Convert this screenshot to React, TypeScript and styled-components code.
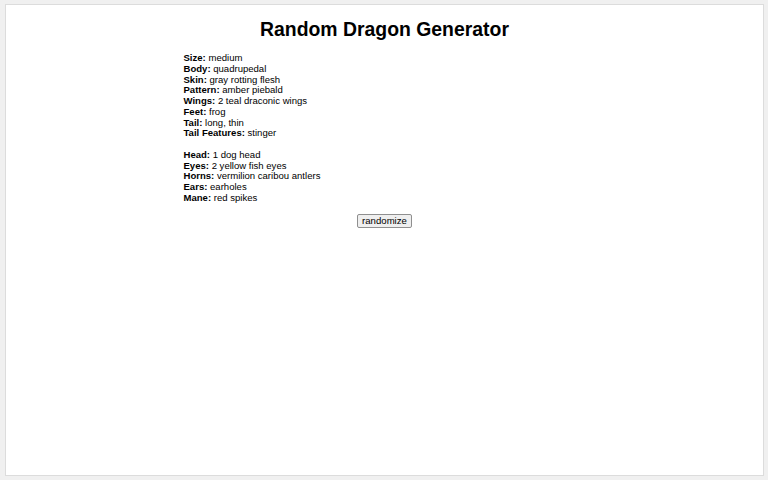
import React, { useState } from 'react';
import styled, { createGlobalStyle } from 'styled-components';

const GlobalStyle = createGlobalStyle`
  html, body {
    margin: 0;
    padding: 0;
    background: #f0f0f0;
  }
  body {
    padding: 4px 4px 4px 5px;
    font-family: "Liberation Sans", Arial, sans-serif;
    color: #000;
  }
`;

const Page = styled.div`
  box-sizing: border-box;
  min-height: calc(100vh - 8px);
  background: #fff;
  border: 1px solid #dcdcdc;
  padding-top: 13px;
`;

const Title = styled.h1`
  margin: 0 0 12px;
  font-size: 19.4px;
  font-weight: bold;
  text-align: center;
  line-height: 23px;
`;

const Sheet = styled.div`
  width: 402px;
  margin: 0 auto;
  font-size: 9.55px;
`;

const Group = styled.div`
  margin-bottom: 10.75px;
`;

const Trait = styled.div`
  line-height: 10.75px;
`;

const Label = styled.b`
  font-weight: bold;
`;

const Actions = styled.div`
  display: flex;
  justify-content: center;
  margin-top: 10px;
`;

const Button = styled.button`
  font-family: "Liberation Sans", Arial, sans-serif;
  font-size: 9.6px;
  line-height: 11px;
  padding: 0 4px 1px;
  background: #efefef;
  border: 1px solid #8f8f8f;
  border-radius: 2px;
  color: #000;
  cursor: pointer;
`;

type Traits = [string, string][];

const body: Traits = [
  ['Size', 'medium'],
  ['Body', 'quadrupedal'],
  ['Skin', 'gray rotting flesh'],
  ['Pattern', 'amber piebald'],
  ['Wings', '2 teal draconic wings'],
  ['Feet', 'frog'],
  ['Tail', 'long, thin'],
  ['Tail Features', 'stinger'],
];

const head: Traits = [
  ['Head', '1 dog head'],
  ['Eyes', '2 yellow fish eyes'],
  ['Horns', 'vermilion caribou antlers'],
  ['Ears', 'earholes'],
  ['Mane', 'red spikes'],
];

function TraitList({ items }: { items: Traits }) {
  return (
    <Group>
      {items.map(([label, value]) => (
        <Trait key={label}>
          <Label>{label}:</Label> {value}
        </Trait>
      ))}
    </Group>
  );
}

export default function App() {
  const [seed, setSeed] = useState(0);
  return (
    <>
      <GlobalStyle />
      <Page>
        <Title>Random Dragon Generator</Title>
        <Sheet key={seed}>
          <TraitList items={body} />
          <TraitList items={head} />
        </Sheet>
        <Actions>
          <Button onClick={() => setSeed(s => s + 1)}>randomize</Button>
        </Actions>
      </Page>
    </>
  );
}
